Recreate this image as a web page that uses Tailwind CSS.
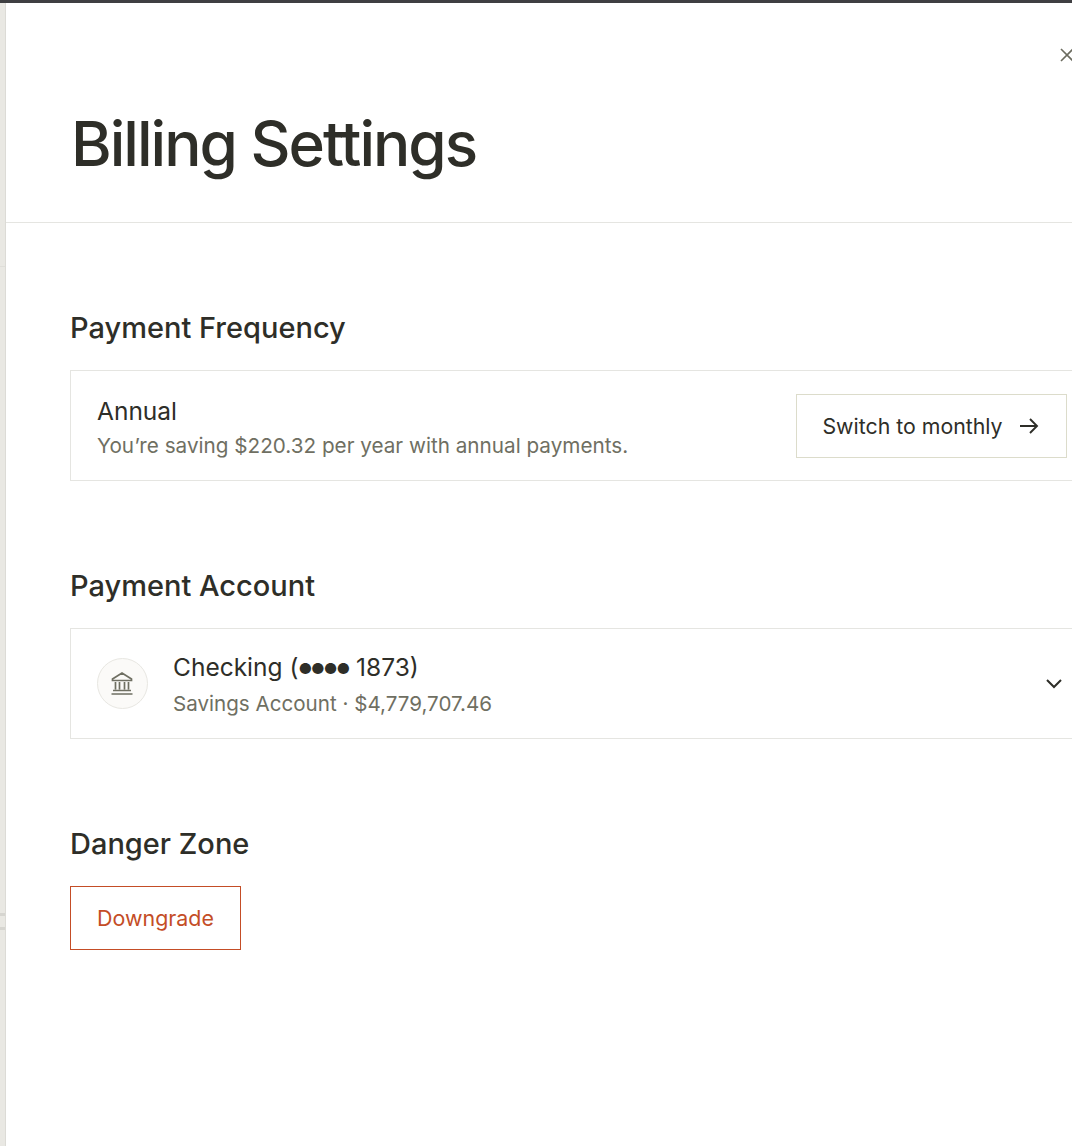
<!DOCTYPE html>
<html lang="en">
<head>
  <meta charset="UTF-8">
  <title>Billing Settings</title>
  <script src="https://cdn.jsdelivr.net/npm/@tailwindcss/browser@4"></script>
</head>
<body class="overflow-hidden">
  <div class="h-[1146px] w-[1072px] overflow-hidden bg-white font-['Inter',sans-serif] text-[#2e2e28]">
    <div class="h-[3px] bg-[#3f3f42]"></div>
    <div class="flex h-[1143px]">
      <div class="w-[6px] shrink-0 border-r border-[#dcdbd6] bg-[#e9e8e3]">
        <div class="mt-[263px] h-px bg-[#dfded9]"></div>
        <div class="mt-[646px] h-[3px] bg-[#d6d5d0]"></div>
        <div class="mt-[11px] h-[3px] bg-[#d6d5d0]"></div>
      </div>
      <div class="w-[1152px] shrink-0">
        <header class="relative h-[220px] border-b border-[#e5e5e1] pl-[65px] pt-[105px]">
          <h1 class="text-[62px] leading-[72px] font-[450] tracking-[-2px]">Billing Settings</h1>
          <svg class="absolute left-[1054px] top-[45px] h-[14px] w-[14px] text-[#6b6b5f]" viewBox="0 0 14 14" fill="none" stroke="currentColor" stroke-width="1.6"><path d="M1 1l12 12M13 1L1 13"/></svg>
        </header>
        <main class="pl-[64px] pr-[64px]">
          <section class="pt-[87px]">
            <h2 class="text-[29px] leading-[36px] font-[450]">Payment Frequency</h2>
            <div class="mt-[24px] flex h-[111px] items-center justify-between border border-[#e5e5e1] pl-[26px] pr-[26px]">
              <div class="pt-[6px]">
                <div class="text-[24.5px] leading-[34px]">Annual</div>
                <div class="text-[20.7px] leading-[36px] text-[#6f6f62]">You’re saving $220.32 per year with annual payments.</div>
              </div>
              <button class="flex h-[64px] w-[271px] items-center justify-center gap-[16px] border border-[#dcdccb] pr-[2px] pt-[2px] text-[21.3px]">
                <span>Switch to monthly</span>
                <svg class="h-[20px] w-[20px] -translate-y-px" viewBox="0 0 20 20" fill="none" stroke="currentColor" stroke-width="1.9"><path d="M1 10h17M11 3l7 7-7 7"/></svg>
              </button>
            </div>
          </section>
          <section class="pt-[87px]">
            <h2 class="text-[29px] leading-[36px] font-[450]">Payment Account</h2>
            <div class="mt-[24px] flex h-[111px] items-center border border-[#e5e5e1] pl-[26px] pr-[26px]">
              <div class="flex h-[51px] w-[51px] items-center justify-center rounded-full border border-[#e8e7e2] bg-[#fbfaf8] text-[#6f6f62]">
                <svg class="h-[24px] w-[24px] -translate-x-px -translate-y-px" viewBox="0 0 24 24" fill="none" stroke="currentColor" stroke-width="1.7"><path d="M2.500 8L12 2l9.500 6v1.500h-19zM5.500 11v7.500M9.500 11v7.500M14.500 11v7.500M18.500 11v7.500M3 19.500h18M1.500 23h21"/></svg>
              </div>
              <div class="ml-[25px] pt-[3px]">
                <div class="text-[24.5px] leading-[36px]">Checking (<span class="text-[15px] tracking-[-1px] align-[2px]">●●●●</span> 1873)</div>
                <div class="text-[20.6px] leading-[34px] text-[#6f6f62]">Savings Account · $4,779,707.46</div>
              </div>
              <svg class="absolute left-[1046px] top-[679px] h-[10px] w-[16px]" viewBox="0 0 16 10" fill="none" stroke="currentColor" stroke-width="2"><path d="M1 1l7 7 7-7"/></svg>
            </div>
          </section>
          <section class="pt-[87px]">
            <h2 class="text-[29px] leading-[36px] font-[450]">Danger Zone</h2>
            <button class="mt-[24px] h-[64px] w-[171px] border border-[#c44d26] text-[21.4px] text-[#c44d26]">Downgrade</button>
          </section>
        </main>
      </div>
    </div>
  </div>
</body>
</html>
